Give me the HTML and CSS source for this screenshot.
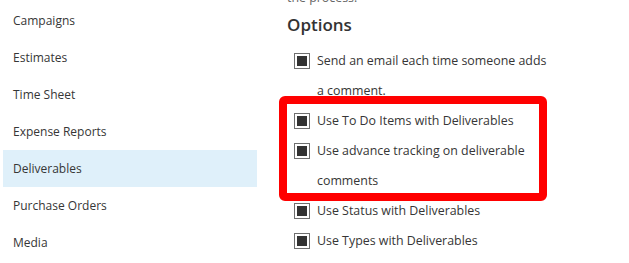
FILE: index.html
```html
<!DOCTYPE html>
<html>
<head>
<meta charset="utf-8">
<link rel="stylesheet" href="styles.css">
</head>
<body>
<div class="page">
  <nav class="sidebar">
    <div class="nav-item">Campaigns</div>
    <div class="nav-item">Estimates</div>
    <div class="nav-item">Time Sheet</div>
    <div class="nav-item">Expense Reports</div>
    <div class="nav-item active">Deliverables</div>
    <div class="nav-item">Purchase Orders</div>
    <div class="nav-item">Media</div>
  </nav>
  <main class="content">
    <p class="intro">the process.</p>
    <h2 class="heading">Options</h2>
    <div class="options">
      <div class="option"><span class="check"><span class="check-fill"></span></span><span class="label">Send an email each time someone adds a comment.</span></div>
      <div class="group">
        <div class="option"><span class="check"><span class="check-fill"></span></span><span class="label">Use To Do Items with Deliverables</span></div>
        <div class="option"><span class="check"><span class="check-fill"></span></span><span class="label">Use advance tracking on deliverable comments</span></div>
      </div>
      <div class="option"><span class="check"><span class="check-fill"></span></span><span class="label">Use Status with Deliverables</span></div>
      <div class="option"><span class="check"><span class="check-fill"></span></span><span class="label">Use Types with Deliverables</span></div>
    </div>
  </main>
</div>
</body>
</html>
```

FILE: styles.css
```css
html, body {
  margin: 0;
  padding: 0;
  background: #ffffff;
  overflow: hidden;
}
body {
  font-family: "Open Sans", "Liberation Sans", sans-serif;
  color: #363636;
  font-size: 12px;
}
.page {
  display: flex;
  align-items: flex-start;
}
.sidebar {
  margin-left: 3px;
  width: 254px;
  padding-top: 2px;
  flex: none;
}
.nav-item {
  height: 37px;
  line-height: 37px;
  padding-left: 10px;
  font-size: 12px;
  color: #363636;
}
.nav-item.active {
  background: #dff0fa;
}
.content {
  margin-left: 30px;
  margin-top: -17px;
  width: 300px;
}
.intro {
  margin: 0;
  line-height: 30px;
  font-size: 12.4px;
  color: #666;
}
.heading {
  margin: 0 0 9px 0;
  font-size: 17px;
  font-weight: 600;
  line-height: 24px;
  color: #333;
}
.options {
  padding-left: 7px;
}
.option {
  display: flex;
  align-items: flex-start;
  gap: 7px;
  line-height: 30px;
  font-size: 12.4px;
}
.label {
  width: 234px;
}
.check {
  flex: none;
  margin-top: 7px;
  width: 16px;
  height: 16px;
  box-sizing: border-box;
  border: 1px solid #707070;
  padding: 2px;
  background: #fff;
}
.check-fill {
  display: block;
  width: 10px;
  height: 10px;
  background: #333;
}
.group {
  position: relative;
}
.group::before {
  content: "";
  position: absolute;
  left: -15px;
  top: -10px;
  width: 268px;
  height: 105px;
  box-sizing: border-box;
  border: 8px solid #ff0000;
  border-radius: 6px;
  pointer-events: none;
}
```
